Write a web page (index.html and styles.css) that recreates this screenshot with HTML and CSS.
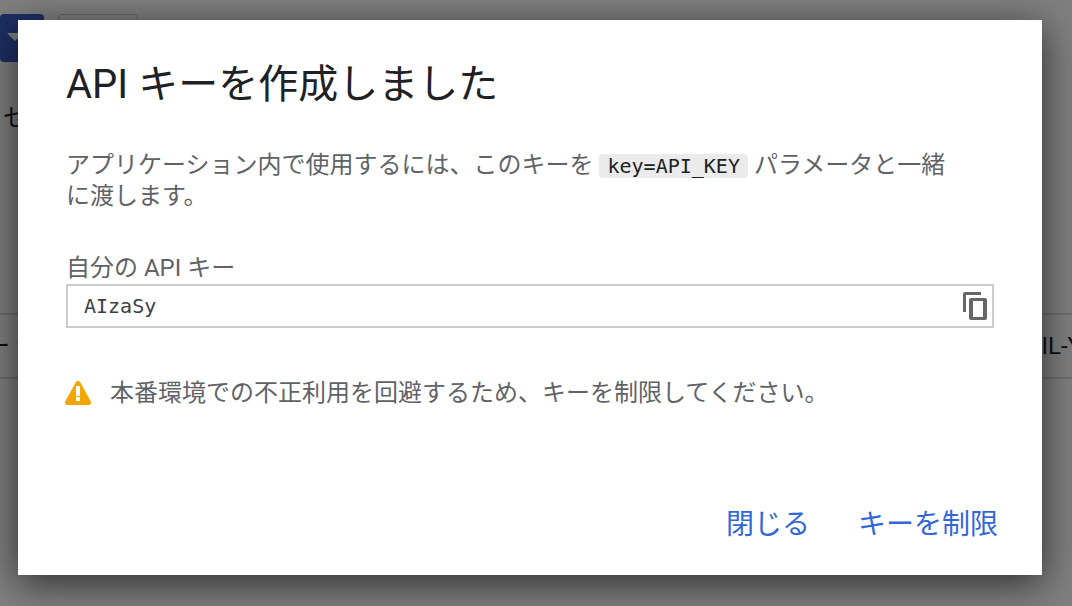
FILE: index.html
```html
<!DOCTYPE html>
<html lang="ja">
<head>
    <meta charset="UTF-8">
    <title>API キーを作成しました</title>
    <link rel="stylesheet" href="styles.css">
</head>
<body>
    <div class="page">
        <div class="toolbar">
            <span class="primary-btn"><span class="caret"></span></span>
            <span class="outline-btn"></span>
        </div>
        <p class="page-text">セ</p>
        <div class="table-row">
            <span class="row-start">ー ヤ</span>
            <span class="row-end">IL-Y</span>
        </div>
    </div>
    <div class="backdrop"></div>
    <section class="dialog">
        <h1 class="dialog-title">API キーを作成しました</h1>
        <p class="dialog-text"><span>アプリケーション内で使用するには、このキーを</span> <code class="inline-code">key=API_KEY</code> <span>パラメータと一緒</span><br><span>に渡します。</span></p>
        <label class="key-label">自分の API キー</label>
        <div class="key-field">
            <span class="key-value">AIzaSy</span>
            <svg class="copy-icon" viewBox="0 0 24 28" width="24" height="28">
                <path d="M2 0h16v3H3v17H0V2a2 2 0 0 1 2-2z"/>
                <path fill-rule="evenodd" d="M8 6h14a2 2 0 0 1 2 2v18a2 2 0 0 1-2 2H8a2 2 0 0 1-2-2V8a2 2 0 0 1 2-2zm2 3v16h10V9z"/>
            </svg>
        </div>
        <div class="warning">
            <svg class="warning-icon" viewBox="0 0 26 24" width="26" height="24">
                <path class="warning-shape" d="M13 2.500 L23.500 21.500 H2.500 Z"/>
                <rect x="11" y="5" width="4" height="10" fill="#fff"/>
                <rect x="11" y="16" width="4" height="4" fill="#fff"/>
            </svg>
            <span>本番環境での不正利用を回避するため、キーを制限してください。</span>
        </div>
        <div class="dialog-actions">
            <a class="action">閉じる</a>
            <a class="action">キーを制限</a>
        </div>
    </section>
</body>
</html>
```

FILE: styles.css
```css
body {
  margin: 0;
  height: 606px;
  overflow: hidden;
  background: #fff;
  font-family: Roboto, "Noto Sans CJK JP", sans-serif;
}

.page {
  color: #222;
}

.toolbar {
  display: flex;
  gap: 14px;
  padding-top: 14px;
  height: 48px;
}

.primary-btn {
  display: block;
  width: 44px;
  height: 48px;
  border-radius: 4px;
  background: #3b5fc8;
  position: relative;
}

.caret {
  position: absolute;
  left: 7px;
  top: 19px;
  border: 8px solid transparent;
  border-top-color: #fff;
}

.outline-btn {
  display: block;
  width: 78px;
  height: 40px;
  border: 1px solid #ccc;
  border-radius: 4px;
}

.page-text {
  margin: 36px 0 0 3px;
  font-size: 24px;
}

.table-row {
  display: flex;
  justify-content: space-between;
  margin-top: 180px;
  height: 62px;
  line-height: 62px;
  font-size: 24px;
  border-top: 2px solid #ddd;
  border-bottom: 2px solid #ddd;
}

.row-start {
  margin-left: -14px;
}

.row-end {
  margin-right: -10px;
}

.backdrop {
  position: absolute;
  inset: 0;
  background: rgba(0, 0, 0, 0.5);
}

.dialog {
  position: absolute;
  left: 18px;
  top: 20px;
  width: 1024px;
  height: 555px;
  box-sizing: border-box;
  padding: 40px 44px 0 48px;
  display: flex;
  flex-direction: column;
  background: #fff;
  box-shadow: 0 8px 36px rgba(0, 0, 0, 0.65);
}

.dialog-title {
  margin: 0;
  font-size: 40px;
  font-weight: 400;
  line-height: 50px;
  color: #202124;
}

.dialog-text {
  margin: 40px 0 0;
  width: 890px;
  font-size: 24px;
  line-height: 31px;
  color: #5f6368;
}

.inline-code {
  display: inline-block;
  padding: 0 8px;
  border-radius: 4px;
  background: #ebebeb;
  color: #202124;
  font-family: "DejaVu Sans Mono", monospace;
  font-size: 20px;
  line-height: 24px;
}

.key-label {
  margin-top: 41px;
  font-size: 24px;
  line-height: 31px;
  color: #5f6368;
}

.key-field {
  display: flex;
  align-items: center;
  justify-content: space-between;
  box-sizing: border-box;
  width: 928px;
  height: 44px;
  padding: 0 5px 0 16px;
  border: 2px solid #ccc;
}

.key-value {
  font-family: "DejaVu Sans Mono", monospace;
  font-size: 20px;
  color: #3c4043;
}

.copy-icon {
  fill: #666;
}

.warning {
  display: flex;
  align-items: center;
  gap: 19px;
  margin: 49px 0 0 -1px;
  font-size: 24px;
  line-height: 32px;
  color: #5f6368;
}

.warning-shape {
  fill: #f2a600;
  stroke: #f2a600;
  stroke-width: 5;
  stroke-linejoin: round;
}

.dialog-actions {
  display: flex;
  justify-content: flex-end;
  gap: 48px;
  margin-top: auto;
  padding-bottom: 30px;
}

.action {
  font-size: 28px;
  line-height: 40px;
  color: #3367d6;
}
```
